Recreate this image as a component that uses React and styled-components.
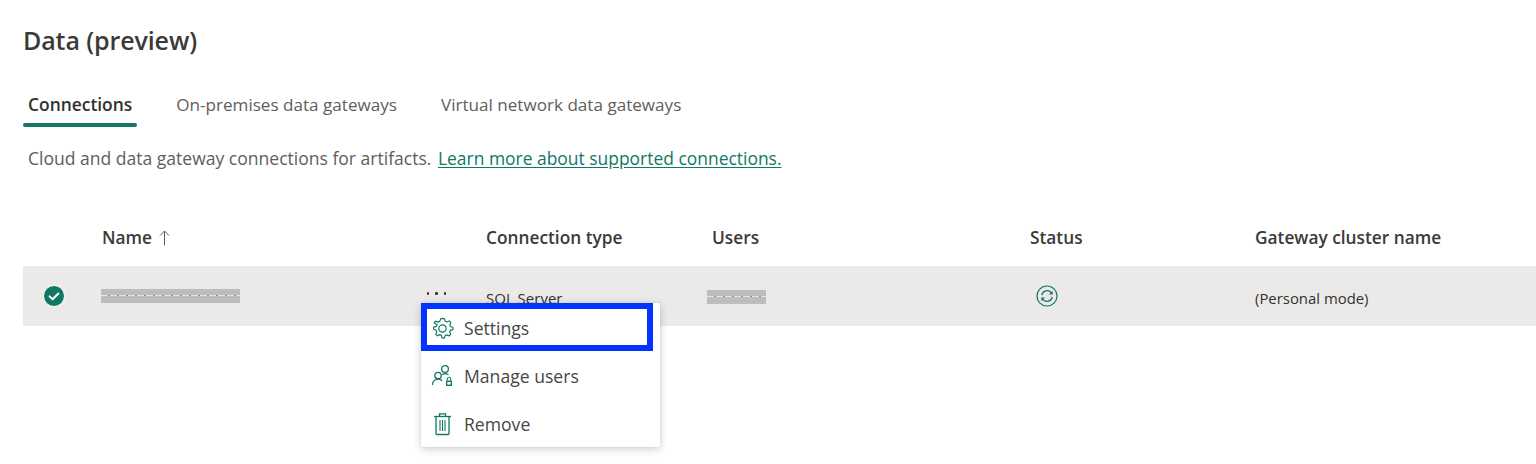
import React from 'react';
import styled, { createGlobalStyle } from 'styled-components';

const Global = createGlobalStyle`
  html, body { margin: 0; padding: 0; background: #fff; overflow: hidden; }
  body { font-family: "Open Sans", "Noto Sans", sans-serif; color: #323130; }
`;
const Page = styled.div`
  width: 1536px; height: 464px; box-sizing: border-box; padding: 24px 0 0 23px; overflow: hidden;
`;
const Title = styled.h1`
  margin: 0; font-size: 25px; line-height: 32px; font-weight: 600; color: #3b3a39; letter-spacing: -0.1px;
`;
const Tabs = styled.div`
  display: flex; margin-top: 30px; height: 40px; gap: 34px;
`;
const Tab = styled.div`
  position: relative; padding: 0 5px; height: 40px; line-height: 37px; font-size: ${p => (p.$active ? 17.4 : 17.1)}px; white-space: nowrap;
  font-weight: ${p => (p.$active ? 600 : 400)};
  color: ${p => (p.$active ? '#323130' : '#605e5c')};
  ${p => p.$active && `
    &::after { content: ""; position: absolute; left: 0; right: 0; bottom: -1px; height: 4px; border-radius: 2px; background: #117865; }
  `}
`;
const Description = styled.p`
  margin: 19px 0 0 5px; font-size: 17.55px; line-height: 26px; color: #605e5c; white-space: nowrap;
`;
const DocLink = styled.a`
  margin-left: 2px; font-size: 17.45px; color: #117865; text-decoration: underline; text-underline-offset: 2px;
`;
const Table = styled.div`
  margin-top: 38px; position: relative;
`;
const grid = `
  display: grid;
  grid-template-columns: 79px 384px 226px 318px 225px 1fr;
  align-items: center;
`;
const HeaderRow = styled.div`
  ${grid}
  height: 57px;
  font-size: 17.3px; font-weight: 600; color: #3b3a39;
`;
const HeaderCell = styled.div`
  display: flex; align-items: center; gap: 7px; white-space: nowrap;
`;
const Row = styled.div`
  ${grid}
  height: 60px; background: #ebeae9; font-size: 14.9px; color: #323130;
`;
const CheckCell = styled.div`
  display: flex; padding-left: 20px; margin-top: -1px;
`;
const NameCell = styled.div`
  display: flex; align-items: center; justify-content: space-between; padding-right: 40px; margin-left: -1px;
`;
const Redacted = styled.div`
  position: relative; width: ${p => p.$w}px; height: 14px;
  background: #bdbdbd;
  &::after {
    content: ""; position: absolute; left: 0; right: 0; top: 6px; height: 1px;
    background: repeating-linear-gradient(90deg, #e4e4e4 0 7px, #8f8f8f 7px 9px);
  }
`;
const Dots = styled.div`
  display: flex; gap: 6px; margin-top: -5px;
  & > i { width: 2.4px; height: 2.4px; border-radius: 50%; background: #323130; display: block; }
`;
const TextCell = styled.div`
  white-space: nowrap; margin-top: ${p => p.$top ?? 4}px; font-size: ${p => p.$size || 14.9}px;
`;
const UsersCell = styled.div`
  margin-left: -5px; margin-top: 1px;
`;
const StatusCell = styled.div`
  display: flex; padding-left: 6px; margin-top: 0;
`;
const Menu = styled.div`
  position: absolute; left: 398px; top: 94px; width: 239px; height: 144px; background: #fff; border-radius: 2px;
  box-shadow: 0 2px 8px rgba(0,0,0,.2), 0 0 2px rgba(0,0,0,.1);
`;
const MenuItem = styled.div`
  display: flex; align-items: center; height: 48px; padding: 2px 0 0 10px; box-sizing: border-box; gap: 10px; font-size: 17.6px; color: #484644;
`;
const Highlight = styled.div`
  position: absolute; left: 0; top: 0; width: 232px; height: 48px; box-sizing: border-box; border: 6px solid #0433ff;
`;

const green = '#117865';
const CheckIcon = () => (
  <svg width="22" height="22" viewBox="0 0 22 22">
    <circle cx="11" cy="11" r="10.5" fill={green} stroke="#fff" strokeWidth="1" />
    <path d="M6.6 11.4l3 2.9 5.8-5.8" fill="none" stroke="#fff" strokeWidth="2" strokeLinecap="round" strokeLinejoin="round" />
  </svg>
);
const RefreshIcon = () => (
  <svg width="22" height="22" viewBox="0 0 22 22" fill="none" stroke={green} strokeWidth="1.2">
    <circle cx="11" cy="11" r="10" />
    <path d="M5.8 10.2a5.3 5.3 0 0 1 9.4-2.6l.9 1.2" strokeWidth="1.3" />
    <path d="M16.2 11.8a5.3 5.3 0 0 1-9.4 2.6l-.9-1.2" strokeWidth="1.3" />
    <path d="M16.6 5.8v3.6h-3.6z" fill={green} stroke="none" />
    <path d="M5.4 16.2v-3.6h3.6z" fill={green} stroke="none" />
  </svg>
);
const GearIcon = () => (
  <svg width="23" height="23" viewBox="0 0 24 24" fill="none" stroke={green} strokeWidth="1.25" strokeLinejoin="round">
    <path d="M12.2 1.5l1.9.3.8 2.7 1.7.8 2.5-1.2 1.6 1.5-1 2.6.7 1.7 2.6 1-.1 2.2-2.7.8-.8 1.7 1.2 2.5-1.5 1.6-2.6-1-1.7.7-1 2.6-2.2-.1-.8-2.7-1.7-.8-2.5 1.2-1.6-1.5 1-2.6-.7-1.7-2.6-1 .1-2.2 2.7-.8.8-1.7L3.3 5.9l1.5-1.6 2.6 1 1.7-.7 1-2.6z" />
    <circle cx="12" cy="12" r="3.8" />
  </svg>
);
const UsersIcon = () => (
  <svg width="23" height="24" viewBox="0 0 22 24" fill="none" stroke={green} strokeWidth="1.3">
    <circle cx="13.5" cy="5" r="3.4" />
    <circle cx="6.5" cy="11.5" r="3.2" />
    <path d="M1 20.5c0-3.2 2.4-5.3 5.5-5.3 1.5 0 2.8.5 3.7 1.3" strokeLinecap="round" />
    <path d="M11 10.5c1.5-1 4-1 5.5 0" strokeLinecap="round" />
    <rect x="14.5" y="16.5" width="6" height="5.5" fill={green} stroke="none" rx=".6" />
    <path d="M15.8 16.5v-1.3a1.7 1.7 0 0 1 3.4 0v1.3" strokeWidth="1.1" />
    <rect x="15.8" y="18" width="3.4" height="2.6" fill="#fff" stroke="none" />
  </svg>
);
const TrashIcon = () => (
  <svg width="23" height="24" viewBox="0 0 22 24" fill="none" stroke={green} strokeWidth="1.3">
    <path d="M2.5 4.5h17" />
    <path d="M8 4.3V1.8h6v2.5" />
    <path d="M4.5 4.5v17a1 1 0 0 0 1 1h11a1 1 0 0 0 1-1v-17" />
    <path d="M8.5 8v11M11 8v11M13.5 8v11" strokeWidth="1.1" />
  </svg>
);
const SortArrow = () => (
  <svg width="11" height="16" viewBox="0 0 11 16" fill="none" stroke="#605e5c" strokeWidth="1">
    <path d="M5.5 15.5V1M1 5.5L5.5 1 10 5.5" />
  </svg>
);

export default function App() {
  return (
    <>
      <Global />
      <Page>
        <Title>Data (preview)</Title>
        <Tabs>
          <Tab $active>Connections</Tab>
          <Tab>On-premises data gateways</Tab>
          <Tab>Virtual network data gateways</Tab>
        </Tabs>
        <Description>
          Cloud and data gateway connections for artifacts. <DocLink>Learn more about supported connections.</DocLink>
        </Description>
        <Table>
          <HeaderRow>
            <div />
            <HeaderCell>Name <SortArrow /></HeaderCell>
            <HeaderCell>Connection type</HeaderCell>
            <HeaderCell>Users</HeaderCell>
            <HeaderCell>Status</HeaderCell>
            <HeaderCell>Gateway cluster name</HeaderCell>
          </HeaderRow>
          <Row>
            <CheckCell><CheckIcon /></CheckCell>
            <NameCell>
              <Redacted $w={139} />
              <Dots><i /><i /><i /></Dots>
            </NameCell>
            <TextCell $size={15} $top={3}>SQL Server</TextCell>
            <UsersCell><Redacted $w={59} /></UsersCell>
            <StatusCell><RefreshIcon /></StatusCell>
            <TextCell>(Personal mode)</TextCell>
          </Row>
          <Menu>
            <MenuItem><GearIcon />Settings</MenuItem>
            <MenuItem><UsersIcon />Manage users</MenuItem>
            <MenuItem><TrashIcon />Remove</MenuItem>
            <Highlight />
          </Menu>
        </Table>
      </Page>
    </>
  );
}
